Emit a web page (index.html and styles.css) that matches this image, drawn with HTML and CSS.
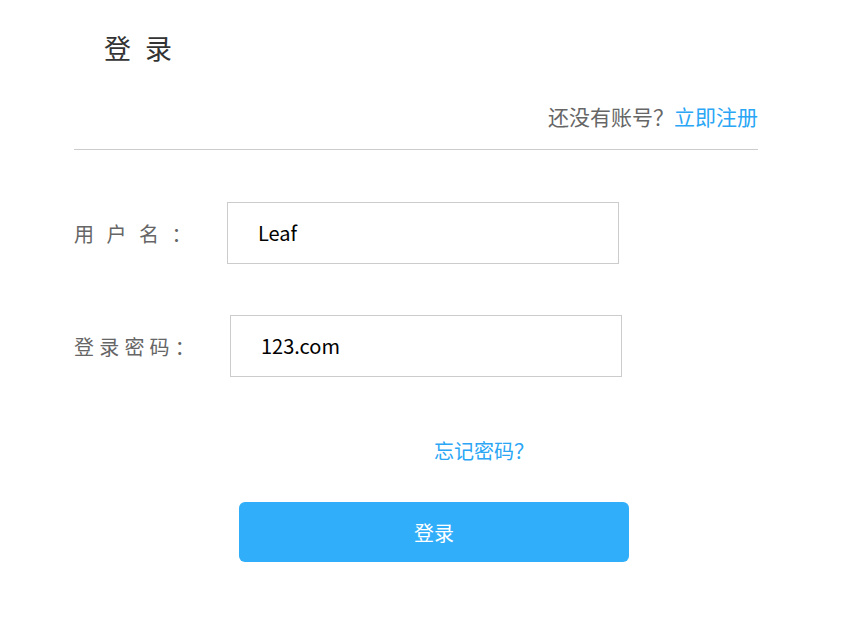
FILE: index.html
```html
<!DOCTYPE html>
<html lang="zh">
<head>
<meta charset="utf-8">
<title>登录</title>
<link rel="stylesheet" href="styles.css">
</head>
<body>
<div class="page">
  <header class="head">
    <h1 class="title">登录</h1>
    <div class="register">还没有账号？<a class="link" href="#">立即注册</a></div>
  </header>
  <form class="form">
    <div class="row row-user">
      <label class="label label-user">用户名：</label>
      <div class="input">Leaf</div>
    </div>
    <div class="row row-pass">
      <label class="label label-pass">登录密码：</label>
      <div class="input">123.com</div>
    </div>
    <div class="forgot"><a class="link" href="#">忘记密码？</a></div>
    <button class="submit" type="button">登录</button>
  </form>
</div>
</body>
</html>
```
FILE: styles.css
```css
* { box-sizing: border-box; }
html, body {
  margin: 0;
  padding: 0;
  background: #fff;
  font-family: "Noto Sans CJK SC", "Noto Sans", sans-serif;
}
.page {
  width: 684px;
  margin-left: 74px;
  padding-top: 26px;
}
.head {
  border-bottom: 1px solid #cccccc;
  padding-bottom: 18px;
}
.title {
  margin: 0 0 31px 30px;
  font-size: 27px;
  line-height: 44px;
  height: 44px;
  font-weight: normal;
  color: #333;
  letter-spacing: 14px;
}
.register {
  text-align: right;
  font-size: 21px;
  line-height: 30px;
  color: #666;
}
.link {
  color: #2aa6f5;
  text-decoration: none;
}
.form {
  padding-top: 52px;
}
.row {
  display: flex;
  align-items: center;
  height: 62px;
}
.row-pass {
  margin-top: 51px;
}
.label {
  font-size: 20px;
  color: #666;
  flex: none;
}
.label-user {
  width: 153px;
  letter-spacing: 12.5px;
}
.label-pass {
  width: 156px;
  letter-spacing: 5.2px;
}
.input {
  width: 392px;
  height: 62px;
  border: 1px solid #cccccc;
  padding-left: 30px;
  font-size: 20px;
  line-height: 60px;
  color: #000;
}
.forgot {
  margin-top: 59px;
  padding-left: 360px;
  font-size: 20px;
  line-height: 30px;
}
.submit {
  display: block;
  margin: 36px 0 0 165px;
  width: 390px;
  height: 60px;
  border: none;
  border-radius: 6px;
  background: #31aefa;
  color: #fff;
  font-family: inherit;
  font-size: 20px;
  padding: 0;
}
```
